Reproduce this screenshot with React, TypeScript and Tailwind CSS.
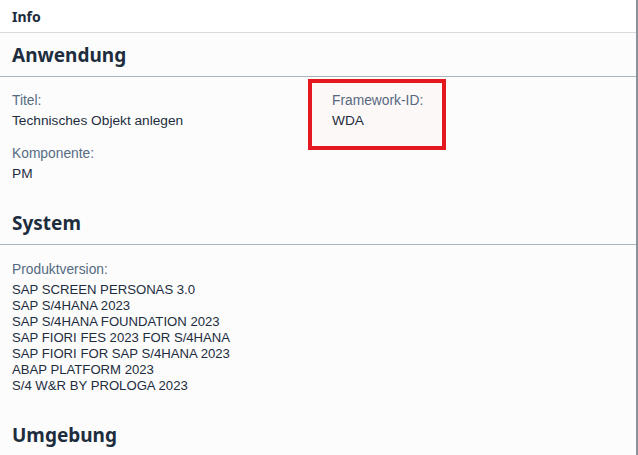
import React from "react";

const products = [
  "SAP SCREEN PERSONAS 3.0",
  "SAP S/4HANA 2023",
  "SAP S/4HANA FOUNDATION 2023",
  "SAP FIORI FES 2023 FOR S/4HANA",
  "SAP FIORI FOR SAP S/4HANA 2023",
  "ABAP PLATFORM 2023",
  "S/4 W&R BY PROLOGA 2023",
];

function SectionTitle({ children, pt }: { children: React.ReactNode; pt: string }) {
  return (
    <div className={`${pt} pb-[8px] px-3 border-b border-[#a9b4be]`}>
      <h2 className="text-[19px] leading-[26px] font-bold text-[#1d2d3e] font-['Noto_Sans',sans-serif]">
        {children}
      </h2>
    </div>
  );
}

function Field({ label, value }: { label: string; value: string }) {
  return (
    <div>
      <div className="text-[13.8px] leading-[16px] text-[#556b82]">{label}</div>
      <div className="mt-[2px] text-[13.7px] leading-[20px] text-[#1d2d3e]">{value}</div>
    </div>
  );
}

export default function App() {
  return (
    <div className="w-[638px] h-[455px] overflow-hidden flex bg-white font-['Liberation_Sans',Arial,sans-serif]">
      <div className="w-[636px] flex flex-col bg-[#fcfcfc]">
        <div className="h-[33px] shrink-0 bg-white border-b border-[#d9dcdf] px-3 flex items-center">
          <span className="text-[14px] font-bold text-[#1d2d3e] font-['Noto_Sans',sans-serif]">Info</span>
        </div>
        <SectionTitle pt="pt-[9px]">Anwendung</SectionTitle>
        <div className="px-3 pt-[16px] pb-[26px] grid grid-cols-[320px_1fr]">
          <div className="flex flex-col gap-[15px]">
            <Field label="Titel:" value="Technisches Objekt anlegen" />
            <Field label="Komponente:" value="PM" />
          </div>
          <div className="relative">
            <Field label="Framework-ID:" value="WDA" />
            <div className="absolute left-[-24px] top-[-14px] w-[138px] h-[71px] border-4 border-[#e3191f] bg-[#e3191f]/[0.015] pointer-events-none" />
          </div>
        </div>
        <SectionTitle pt="pt-0">System</SectionTitle>
        <div className="px-3 pt-[17px]">
          <div className="text-[13.8px] leading-[16px] text-[#556b82] mb-[4px]">Produktversion:</div>
          {products.map((p) => (
            <div key={p} className="text-[13.15px] leading-[16px] text-[#1d2d3e]">
              {p}
            </div>
          ))}
        </div>
        <div className="px-3 pt-[28px]">
          <h2 className="text-[19px] leading-[26px] font-bold text-[#1d2d3e] font-['Noto_Sans',sans-serif]">
            Umgebung
          </h2>
        </div>
      </div>
      <div className="w-[2px] h-full bg-[#8a939c]" />
    </div>
  );
}
